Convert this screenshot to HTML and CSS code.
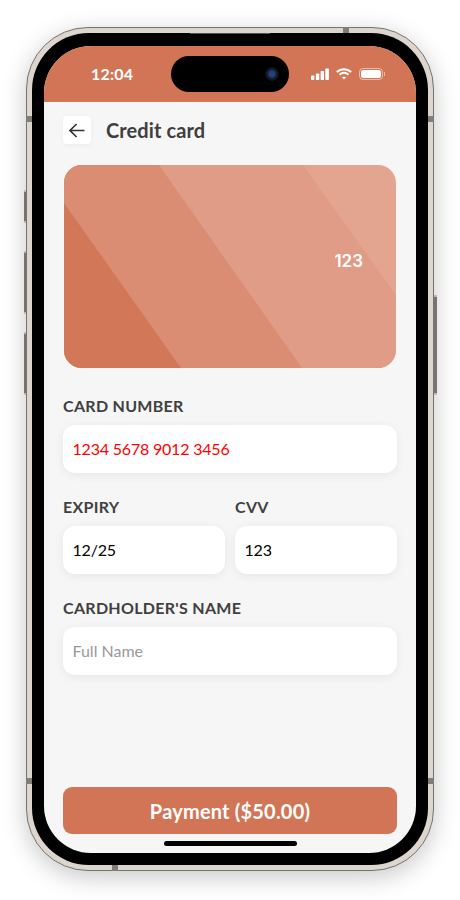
FILE: index.html
```html
<!DOCTYPE html>
<html lang="en">
<head>
<meta charset="utf-8">
<title>Credit card</title>
<link rel="stylesheet" href="styles.css">
</head>
<body>
<div class="phone">
  <span class="btn btn-silent"></span>
  <span class="btn btn-up"></span>
  <span class="btn btn-down"></span>
  <span class="btn btn-power"></span>
  <span class="band band-top"></span>
  <span class="band band-bottom"></span>
  <span class="band band-lt"></span>
  <span class="band band-rt"></span>
  <span class="band band-lb"></span>
  <span class="band band-rb"></span>
  <div class="bezel">
    <span class="speaker"></span>
    <div class="screen">
      <div class="status">
        <span class="time">12:04</span>
        <span class="island"><span class="camera"></span></span>
        <div class="status-icons">
          <svg class="signal" width="19" height="12" viewBox="0 0 19 12" aria-hidden="true">
            <rect x="0" y="7.6" width="3.4" height="4.4" rx="0.8"/>
            <rect x="4.9" y="5.4" width="3.4" height="6.6" rx="0.8"/>
            <rect x="9.6" y="3" width="3.4" height="9" rx="0.8"/>
            <rect x="14.3" y="0.4" width="3.6" height="11.6" rx="0.8"/>
          </svg>
          <svg class="wifi" width="16" height="12" viewBox="0 0 16 12" aria-hidden="true">
            <path d="M0.9 4.1C4.9 0.3 11.1 0.3 15.1 4.1" />
            <path d="M3.5 6.7C6.1 4.3 9.9 4.3 12.5 6.7" />
            <path class="wifi-dot" d="M8 11.6 5.9 9.3C7.1 8.3 8.9 8.3 10.1 9.3Z" />
          </svg>
          <span class="battery"><span class="battery-fill"></span></span>
        </div>
      </div>
      <div class="content">
        <div class="topbar">
          <div class="back">
            <svg width="16" height="15" viewBox="0 0 16 15" aria-hidden="true">
              <path d="M15.5 7.5H1M7.6 1 1 7.5 7.6 14"/>
            </svg>
          </div>
          <h1 class="title">Credit card</h1>
        </div>
        <div class="card">
          <svg class="card-art" viewBox="0 0 332 203" preserveAspectRatio="none" aria-hidden="true">
            <rect class="tone-4" width="332" height="203"/>
            <polygon class="tone-3" points="0,0 239,0 332,130 332,203 0,203"/>
            <polygon class="tone-2" points="0,0 95,0 238,203 0,203"/>
            <polygon class="tone-1" points="0,38 117,203 0,203"/>
          </svg>
          <span class="card-cvv">123</span>
        </div>
        <div class="field field-number">
          <div class="label">CARD NUMBER</div>
          <div class="input input-error">1234 5678 9012 3456</div>
        </div>
        <div class="row">
          <div class="field">
            <div class="label">EXPIRY</div>
            <div class="input">12/25</div>
          </div>
          <div class="field">
            <div class="label">CVV</div>
            <div class="input">123</div>
          </div>
        </div>
        <div class="field">
          <div class="label">CARDHOLDER'S NAME</div>
          <div class="input input-placeholder">Full Name</div>
        </div>
        <div class="pay">Payment ($50.00)</div>
        <div class="home"></div>
      </div>
    </div>
  </div>
</div>
</body>
</html>
```
FILE: styles.css
```css
* { box-sizing: border-box; }
html, body { margin: 0; padding: 0; background: #fff; }
body {
  width: 460px;
  height: 900px;
  overflow: hidden;
  font-family: "Lato", "Noto Sans", sans-serif;
  padding: 27px 0 0 26px;
}
.phone {
  position: relative;
  width: 408px;
  height: 844px;
  padding: 5px;
  border: 1px solid #77736f;
  border-radius: 62px;
  background: #ddd6cf;
  box-shadow: 0 6px 24px rgba(0, 0, 0, 0.22);
}
.btn {
  position: absolute;
  width: 2.5px;
  background: #77736e;
  border-top: 2px solid #b9b5b0;
  border-bottom: 2px solid #b9b5b0;
  border-radius: 1px;
}
.btn-silent { left: -3.5px; top: 162px; height: 33px; }
.btn-up { left: -3.5px; top: 223px; height: 63px; }
.btn-down { left: -3.5px; top: 304px; height: 63px; }
.btn-power { right: -3.5px; top: 267px; height: 100px; }
.band { position: absolute; background: #817d79; }
.band-top { left: 316px; top: -1px; width: 6px; height: 6px; }
.band-bottom { left: 85px; bottom: -1px; width: 6px; height: 6px; }
.band-lt { left: -1px; top: 88px; width: 6px; height: 6px; }
.band-rt { right: -1px; top: 88px; width: 6px; height: 6px; }
.band-lb { left: -1px; top: 750px; width: 6px; height: 6px; }
.band-rb { right: -1px; top: 750px; width: 6px; height: 6px; }
.bezel {
  position: relative;
  height: 100%;
  padding: 13px 12px 12px;
  background: #000;
  border-radius: 57px;
}
.speaker {
  position: absolute;
  left: 158px;
  top: 0;
  width: 80px;
  height: 1px;
  background: #555;
}
.screen {
  height: 100%;
  display: flex;
  flex-direction: column;
  background: #f6f6f6;
  border-radius: 47px;
  overflow: hidden;
}
.status {
  position: relative;
  flex: none;
  height: 55.5px;
  display: flex;
  align-items: center;
  justify-content: space-between;
  padding: 1px 33px 0 47px;
  background: #d27556;
  color: #fff;
}
.time {
  font-size: 16px;
  font-weight: 700;
  line-height: 20px;
  margin-top: -1px;
  letter-spacing: 0.2px;
}
.island {
  position: absolute;
  left: 127px;
  top: 10px;
  width: 118px;
  height: 35.5px;
  background: #000;
  border-radius: 18px;
}
.camera {
  position: absolute;
  right: 10px;
  top: 11px;
  width: 14px;
  height: 14px;
  border-radius: 50%;
  background: radial-gradient(circle, #24407a 0 26%, #141a2c 50%, #0b0c10 75%);
}
.status-icons { display: flex; align-items: center; gap: 7px; margin-top: -1px; }
.signal { display: block; fill: #fff; margin-right: -1px; }
.wifi { display: block; fill: none; stroke: #fff; stroke-width: 2.1; }
.wifi .wifi-dot { fill: #fff; stroke: none; }
.battery {
  position: relative;
  display: block;
  width: 24px;
  height: 12px;
  padding: 1px;
  border: 1px solid rgba(255, 255, 255, 0.5);
  border-radius: 4px;
}
.battery::after {
  content: "";
  position: absolute;
  right: -3px;
  top: 3px;
  width: 1px;
  height: 4px;
  background: rgba(255, 255, 255, 0.5);
}
.battery-fill {
  display: block;
  height: 100%;
  background: #fff;
  border-radius: 2.5px;
}
.content {
  flex: 1;
  min-height: 0;
  display: flex;
  flex-direction: column;
  padding: 14.5px 19px 7.5px;
}
.topbar { display: flex; align-items: center; gap: 15px; height: 28px; }
.back {
  flex: none;
  width: 28px;
  height: 28px;
  display: flex;
  align-items: center;
  justify-content: center;
  background: #fff;
  border-radius: 4px;
  box-shadow: 0 1px 4px rgba(0, 0, 0, 0.05);
}
.back svg { display: block; fill: none; stroke: #333; stroke-width: 1.6; }
.title {
  margin: 0;
  font-size: 20px;
  font-weight: 700;
  line-height: 28px;
  letter-spacing: 0.1px;
  color: #3f3f3f;
}
.card {
  position: relative;
  height: 203px;
  margin: 21px 1px 0;
  border-radius: 18px;
  overflow: hidden;
}
.card-art { display: block; width: 100%; height: 100%; }
.tone-1 { fill: #d27758; }
.tone-2 { fill: #da8d73; }
.tone-3 { fill: #e09c86; }
.tone-4 { fill: #e3a490; }
.card-cvv {
  position: absolute;
  right: 33px;
  top: 84px;
  font-family: "Inter", sans-serif;
  font-size: 17px;
  font-weight: 600;
  line-height: 24px;
  color: #fff;
}
.field { display: flex; flex-direction: column; min-width: 0; margin-top: 23.5px; }
.field-number { margin-top: 27px; }
.label {
  height: 22px;
  margin-bottom: 8px;
  font-size: 16px;
  font-weight: 700;
  line-height: 22px;
  letter-spacing: 0.3px;
  color: #404040;
}
.row { display: grid; grid-template-columns: 1fr 1fr; gap: 10px; }
.input {
  height: 47.5px;
  padding: 0 9.5px;
  display: flex;
  align-items: center;
  background: #fff;
  border-radius: 12px;
  box-shadow: 0 2px 10px rgba(0, 0, 0, 0.07);
  font-size: 16px;
  letter-spacing: -0.2px;
  color: #000;
}
.input-error { color: #ff0000; }
.input-placeholder { color: #999; letter-spacing: 0; }
.pay {
  margin-top: auto;
  height: 47px;
  display: flex;
  align-items: center;
  justify-content: center;
  background: #d27556;
  border-radius: 9px;
  font-size: 20px;
  font-weight: 700;
  letter-spacing: 0.2px;
  color: #fff;
}
.home {
  flex: none;
  align-self: center;
  width: 133px;
  height: 4.5px;
  margin-top: 7px;
  background: #000;
  border-radius: 3px;
}
```
